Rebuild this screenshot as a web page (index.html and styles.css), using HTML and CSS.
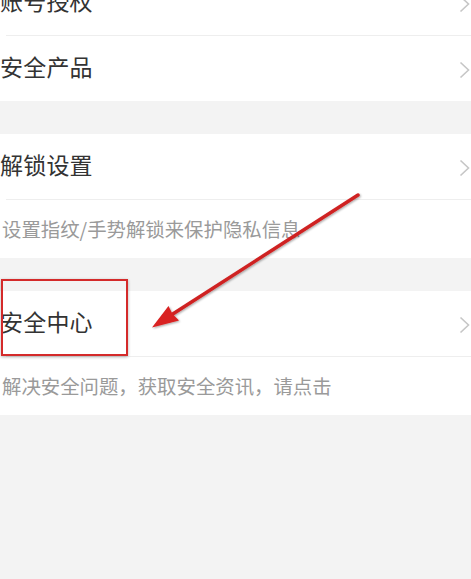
FILE: index.html
```html
<!DOCTYPE html>
<html lang="zh-CN">
<head>
<meta charset="utf-8">
<title>安全设置</title>
<link rel="stylesheet" href="styles.css">
</head>
<body>
<div class="page">
  <div class="list">
    <section class="group">
      <div class="row">
        <span class="title">账号授权</span>
        <svg class="chev" viewBox="0 0 11 18"><polyline points="1.5,1.5 9.5,9 1.5,16.5"/></svg>
      </div>
      <div class="row">
        <span class="title">安全产品</span>
        <svg class="chev" viewBox="0 0 11 18"><polyline points="1.5,1.5 9.5,9 1.5,16.5"/></svg>
      </div>
    </section>
    <section class="group">
      <div class="row">
        <span class="title">解锁设置</span>
        <svg class="chev" viewBox="0 0 11 18"><polyline points="1.5,1.5 9.5,9 1.5,16.5"/></svg>
      </div>
      <div class="desc">设置指纹/手势解锁来保护隐私信息</div>
    </section>
    <section class="group">
      <div class="row">
        <span class="title">安全中心</span>
        <svg class="chev" viewBox="0 0 11 18"><polyline points="1.5,1.5 9.5,9 1.5,16.5"/></svg>
      </div>
      <div class="desc">解决安全问题，获取安全资讯，请点击</div>
    </section>
  </div>
  <div class="mark-box"></div>
  <svg class="mark-arrow" viewBox="0 0 471 579">
    <defs>
      <filter id="sh" x="-10%" y="-10%" width="120%" height="120%">
        <feGaussianBlur in="SourceAlpha" stdDeviation="1.2"/>
        <feOffset dx="0.5" dy="1"/>
        <feComponentTransfer><feFuncA type="linear" slope="0.35"/></feComponentTransfer>
        <feMerge><feMergeNode/><feMergeNode in="SourceGraphic"/></feMerge>
      </filter>
    </defs>
    <g filter="url(#sh)">
      <line x1="358" y1="195" x2="172" y2="314.5" stroke="#cf2222" stroke-width="3.5" stroke-linecap="round"/>
      <polygon points="152,327.5 179,320.5 172.5,314 168.5,306" fill="#d92020"/>
    </g>
  </svg>
</div>
</body>
</html>
```

FILE: styles.css
```css
html, body {
  margin: 0;
  padding: 0;
}

body {
  background: #f3f3f3;
  font-family: "Noto Sans CJK SC", "Noto Sans", sans-serif;
  width: 471px;
  height: 579px;
  overflow: hidden;
}

.page {
  position: relative;
  width: 471px;
  height: 579px;
  overflow: hidden;
}

.list {
  margin-top: -30px;
  display: flex;
  flex-direction: column;
  gap: 33px;
}

.group {
  background: #ffffff;
  display: flex;
  flex-direction: column;
}

.row {
  height: 65px;
  display: flex;
  align-items: center;
  justify-content: space-between;
  border-bottom: 1px solid #eeeeee;
  margin-left: 6px;
  padding-right: 1px;
}

.group .row:last-child {
  border-bottom: none;
}

.title {
  margin-left: -6px;
  padding-bottom: 6px;
  font-size: 23px;
  color: #333333;
  letter-spacing: 0.2px;
}

.chev {
  width: 11px;
  height: 18px;
  fill: none;
  stroke: #c6c6c6;
  stroke-width: 1.6;
  margin-top: 2px;
}

.desc {
  height: 58px;
  display: flex;
  align-items: center;
  padding-left: 2px;
  padding-bottom: 2px;
  box-sizing: border-box;
  font-size: 19.4px;
  color: #9a9a9a;
}

.mark-box {
  position: absolute;
  left: 1px;
  top: 279px;
  width: 123px;
  height: 73px;
  border: 2.5px solid #d42a2a;
  box-shadow: 0 1px 3px rgba(0, 0, 0, 0.3);
}

.mark-arrow {
  position: absolute;
  left: 0;
  top: 0;
  width: 471px;
  height: 579px;
  pointer-events: none;
}
```
